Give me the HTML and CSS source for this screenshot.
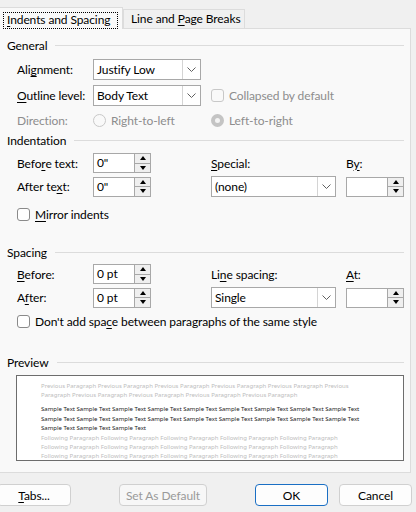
FILE: index.html
```html
<!DOCTYPE html>
<html lang="en">
<head>
  <meta charset="UTF-8" />
  <meta name="viewport" content="width=device-width, initial-scale=1.0"/>
  <title>Paragraph</title>
  <link rel="stylesheet" href="styles.css">
</head>
<body>
  <div class="dialog">
    <div class="tabs">
      <div class="tab active"><span class="focus"><u>I</u>ndents and Spacing</span></div>
      <div class="tab"><span>Line and <u>P</u>age Breaks</span></div>
    </div>

    <div class="panel">
      <!-- General -->
      <div class="group-title"><span>General</span></div>
      <div class="row r1">
        <label>Ali<u>g</u>nment:</label>
        <div class="select sel-left"><span class="val">Justify Low</span><span class="drop"><svg width="9" height="5" viewBox="0 0 9 5"><polyline points="0.5,0.5 4.5,4.5 8.5,0.5" fill="none" stroke="#606060" stroke-width="1"/></svg></span></div>
      </div>
      <div class="row r2">
        <label><u>O</u>utline level:</label>
        <div class="select sel-left"><span class="val">Body Text</span><span class="drop"><svg width="9" height="5" viewBox="0 0 9 5"><polyline points="0.5,0.5 4.5,4.5 8.5,0.5" fill="none" stroke="#606060" stroke-width="1"/></svg></span></div>
        <div class="opt wide disabled"><span class="check off"></span><span>Collapsed by default</span></div>
      </div>
      <div class="row r3 disabled">
        <label>Direction:</label>
        <div class="opt"><span class="radio"></span><span>Right-to-left</span></div>
        <div class="opt wide"><span class="radio on"></span><span>Left-to-right</span></div>
      </div>

      <!-- Indentation -->
      <div class="group-title t2"><span>Indentation</span></div>
      <div class="row ra">
        <label>Befo<u>r</u>e text:</label>
        <div class="spin"><span class="val">0"</span><span class="arrows"><span class="up"></span><span class="down"></span></span></div>
        <label><u>S</u>pecial:</label>
        <label>B<u>y</u>:</label>
      </div>
      <div class="row rb">
        <label>After te<u>x</u>t:</label>
        <div class="spin"><span class="val">0"</span><span class="arrows"><span class="up"></span><span class="down"></span></span></div>
        <div class="select sel-right"><span class="val">(none)</span><span class="drop"><svg width="9" height="5" viewBox="0 0 9 5"><polyline points="0.5,0.5 4.5,4.5 8.5,0.5" fill="none" stroke="#606060" stroke-width="1"/></svg></span></div>
        <div class="spin"><span class="val"></span><span class="arrows"><span class="up"></span><span class="down"></span></span></div>
      </div>
      <div class="opt line mirror"><span class="check"></span><span><u>M</u>irror indents</span></div>

      <!-- Spacing -->
      <div class="group-title t3"><span>Spacing</span></div>
      <div class="row ra sa">
        <label><u>B</u>efore:</label>
        <div class="spin"><span class="val">0 pt</span><span class="arrows"><span class="up"></span><span class="down"></span></span></div>
        <label>Li<u>n</u>e spacing:</label>
        <label><u>A</u>t:</label>
      </div>
      <div class="row rb">
        <label>A<u>f</u>ter:</label>
        <div class="spin"><span class="val">0 pt</span><span class="arrows"><span class="up"></span><span class="down"></span></span></div>
        <div class="select sel-right"><span class="val">Single</span><span class="drop"><svg width="9" height="5" viewBox="0 0 9 5"><polyline points="0.5,0.5 4.5,4.5 8.5,0.5" fill="none" stroke="#606060" stroke-width="1"/></svg></span></div>
        <div class="spin"><span class="val"></span><span class="arrows"><span class="up"></span><span class="down"></span></span></div>
      </div>
      <div class="opt line noadd"><span class="check"></span><span>Don't add spa<u>c</u>e between paragraphs of the same style</span></div>

      <!-- Preview -->
      <div class="group-title t4"><span>Preview</span></div>
      <div class="preview">
        <div class="para prev">
          <div>Previous Paragraph Previous Paragraph Previous Paragraph Previous Paragraph Previous Paragraph Previous</div>
          <div>Paragraph Previous Paragraph Previous Paragraph Previous Paragraph Previous Paragraph</div>
        </div>
        <div class="para sample">
          <div>Sample Text Sample Text Sample Text Sample Text Sample Text Sample Text Sample Text Sample Text Sample Text</div>
          <div>Sample Text Sample Text Sample Text Sample Text Sample Text Sample Text Sample Text Sample Text Sample Text</div>
          <div>Sample Text Sample Text Sample Text</div>
        </div>
        <div class="para follow">
          <div>Following Paragraph Following Paragraph Following Paragraph Following Paragraph Following Paragraph</div>
          <div>Following Paragraph Following Paragraph Following Paragraph Following Paragraph Following Paragraph</div>
          <div>Following Paragraph Following Paragraph Following Paragraph Following Paragraph Following Paragraph</div>
        </div>
      </div>
    </div>

    <div class="footer">
      <button class="btn tabs-btn"><u>T</u>abs...</button>
      <button class="btn default-btn" disabled>Set As Default</button>
      <button class="btn ok-btn">OK</button>
      <button class="btn cancel-btn">Cancel</button>
    </div>
  </div>
</body>
</html>
```

FILE: styles.css
```css
body {
  margin: 0;
  background: #f0f0f0;
  font-family: Lato, "Noto Sans", sans-serif;
  font-size: 12px;
  letter-spacing: -0.1px;
  color: #000;
}

u {
  text-underline-offset: 2px;
}

.dialog {
  width: 416px;
  height: 512px;
  overflow: hidden;
}

/* tabs */
.tabs {
  display: flex;
  align-items: flex-end;
  height: 28px;
  white-space: nowrap;
}

.tab {
  box-sizing: border-box;
  height: 19px;
  width: 122px;
  padding-left: 7px;
  line-height: 18px;
  background: #f0f0f0;
  border: 1px solid #dcdcdc;
  border-bottom: none;
}

.tab.active {
  width: 123px;
  height: 22px;
  margin-bottom: -1px;
  padding-left: 3px;
  padding-top: 3px;
  background: #f9f9f9;
  border-left: none;
  position: relative;
  z-index: 1;
}

.focus {
  display: inline-block;
  width: 115px;
  box-sizing: border-box;
  height: 17px;
  line-height: 16px;
  padding: 0 0 0 4px;
  outline: 1px dotted #000;
  outline-offset: -1px;
}

/* panel */
.panel {
  box-sizing: border-box;
  width: 411px;
  height: 445px;
  padding-top: 8px;
  background: #f9f9f9;
  border-top: 1px solid #dcdcdc;
  border-right: 1px solid #dcdcdc;
  border-bottom: 1px solid #dcdcdc;
}

.group-title {
  display: flex;
  align-items: center;
  gap: 8px;
  height: 16px;
  padding-left: 7px;
  padding-right: 6px;
}

.group-title::after {
  content: "";
  flex: 1;
  height: 1px;
  background: #dcdcdc;
}

.group-title.t2 { margin-top: 3px; }
.group-title.t3 { margin-top: 22px; }
.group-title.t4 { margin-top: 25px; }

.row {
  display: grid;
  grid-template-columns: 76px 118px 135px 58px;
  align-items: center;
  padding-left: 17px;
  white-space: nowrap;
}

.row.r1 { height: 21px; margin-top: 6px; }
.row.r2 { height: 21px; margin-top: 5px; }
.row.r3 { height: 18px; margin-top: 5px; }
.row.ra { height: 20px; margin-top: 5px; }
.row.sa { margin-top: 4px; }
.row.rb { height: 21px; margin-top: 3px; }

.disabled {
  color: #8d8d8d;
}

.opt {
  display: flex;
  align-items: center;
  gap: 5px;
}

.opt.wide {
  grid-column: span 2;
}

.opt.line {
  height: 16px;
  padding-left: 17px;
}

.opt.mirror { margin-top: 9px; }
.opt.noadd { margin-top: 5px; }

.check {
  box-sizing: border-box;
  width: 13px;
  height: 13px;
  border: 1px solid #8a8a8a;
  border-radius: 3px;
  background: #fff;
}

.check.off {
  border-color: #c8c8c8;
  background: #f9f9f9;
}

.radio {
  box-sizing: border-box;
  width: 13px;
  height: 13px;
  border: 1px solid #c8c8c8;
  border-radius: 50%;
  background: #f9f9f9;
}

.radio.on {
  border: 4px solid #c4c4c4;
  background: #f4f4f4;
}

/* select */
.select {
  box-sizing: border-box;
  display: flex;
  height: 21px;
  background: #fff;
  border: 1px solid #a8a8a8;
}

.sel-left { width: 108px; }
.sel-right { width: 125px; }

.select .val {
  flex: 1;
  padding-left: 3px;
  line-height: 19px;
}

.drop {
  width: 17px;
  border-left: 1px solid #d4d4d4;
  display: flex;
  align-items: center;
  justify-content: center;
}

/* spin box */
.spin {
  box-sizing: border-box;
  display: flex;
  width: 58px;
  height: 20px;
  background: #fff;
  border: 1px solid #a8a8a8;
}

.spin .val {
  flex: 1;
  padding-left: 3px;
  line-height: 18px;
}

.arrows {
  width: 15px;
  display: flex;
  flex-direction: column;
  border-left: 1px solid #a8a8a8;
  background: #efefef;
}

.arrows span {
  flex: 1;
  display: flex;
  align-items: center;
  justify-content: center;
}

.arrows .up {
  border-bottom: 1px solid #a8a8a8;
}

.arrows .up::before {
  content: "";
  border-left: 3px solid transparent;
  border-right: 3px solid transparent;
  border-bottom: 4px solid #000;
}

.arrows .down::before {
  content: "";
  border-left: 3px solid transparent;
  border-right: 3px solid transparent;
  border-top: 4px solid #000;
}

/* preview */
.preview {
  box-sizing: border-box;
  width: 388px;
  height: 86px;
  margin: 5px 0 0 16px;
  padding: 6px 0 0 24px;
  background: #fff;
  border: 1px solid #6d6d6d;
  font-family: "Noto Sans", sans-serif;
  font-size: 6px;
  letter-spacing: 0;
  line-height: 9.2px;
  white-space: nowrap;
}

.para.prev,
.para.follow {
  color: #bdbdbd;
}

.para.sample {
  color: #222;
  margin-top: 5px;
  margin-bottom: 1px;
}

/* footer */
.footer {
  display: flex;
  padding-top: 11px;
}

.btn {
  box-sizing: border-box;
  height: 22px;
  font-family: inherit;
  font-size: 12px;
  letter-spacing: -0.1px;
  color: #000;
  background: #fdfdfd;
  border: 1px solid #d0d0d0;
  border-radius: 4px;
  padding: 0;
}

.tabs-btn { width: 74px; margin-left: -3px; }
.default-btn { width: 88px; margin-left: 48px; color: #9a9a9a; background: #f7f7f7; }
.ok-btn { width: 73px; margin-left: 48px; border-color: #1a6fc4; }
.cancel-btn { width: 73px; margin-left: 11px; }
```
